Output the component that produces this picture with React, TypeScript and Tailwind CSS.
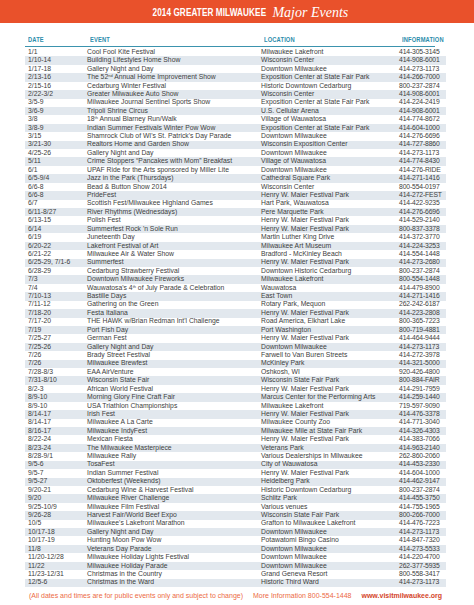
type Row = [string, string, string, string];

const rows: Row[] = [
  ["1/1", "Cool Fool Kite Festival", "Milwaukee Lakefront", "414-305-3145"],
  ["1/10-14", "Building Lifestyles Home Show", "Wisconsin Center", "414-908-6001"],
  ["1/17-18", "Gallery Night and Day", "Downtown Milwaukee", "414-273-1173"],
  ["2/13-16", "The 52^nd^ Annual Home Improvement Show", "Exposition Center at State Fair Park", "414-266-7000"],
  ["2/15-16", "Cedarburg Winter Festival", "Historic Downtown Cedarburg", "800-237-2874"],
  ["2/22-3/2", "Greater Milwaukee Auto Show", "Wisconsin Center", "414-908-6001"],
  ["3/5-9", "Milwaukee Journal Sentinel Sports Show", "Exposition Center at State Fair Park", "414-224-2419"],
  ["3/6-9", "Tripoli Shrine Circus", "U.S. Cellular Arena", "414-908-6001"],
  ["3/8", "18^th^ Annual Blarney Run/Walk", "Village of Wauwatosa", "414-774-8672"],
  ["3/8-9", "Indian Summer Festivals Winter Pow Wow", "Exposition Center at State Fair Park", "414-604-1000"],
  ["3/15", "Shamrock Club of WI's St. Patrick's Day Parade", "Downtown Milwaukee", "414-276-6696"],
  ["3/21-30", "Realtors Home and Garden Show", "Wisconsin Exposition Center", "414-727-8860"],
  ["4/25-26", "Gallery Night and Day", "Downtown Milwaukee", "414-273-1173"],
  ["5/11", "Crime Stoppers \u201cPancakes with Mom\u201d Breakfast", "Village of Wauwatosa", "414-774-8430"],
  ["6/1", "UPAF Ride for the Arts sponsored by Miller Lite", "Downtown Milwaukee", "414-276-RIDE"],
  ["6/5-9/4", "Jazz in the Park (Thursdays)", "Cathedral Square Park", "414-271-1416"],
  ["6/6-8", "Bead & Button Show 2014", "Wisconsin Center", "800-554-0197"],
  ["6/6-8", "PrideFest", "Henry W. Maier Festival Park", "414-272-FEST"],
  ["6/7", "Scottish Fest/Milwaukee Highland Games", "Hart Park, Wauwatosa", "414-422-9235"],
  ["6/11-8/27", "River Rhythms (Wednesdays)", "Pere Marquette Park", "414-276-6696"],
  ["6/13-15", "Polish Fest", "Henry W. Maier Festival Park", "414-529-2140"],
  ["6/14", "Summerfest Rock 'n Sole Run", "Henry W. Maier Festival Park", "800-837-3378"],
  ["6/19", "Juneteenth Day", "Martin Luther King Drive", "414-372-3770"],
  ["6/20-22", "Lakefront Festival of Art", "Milwaukee Art Museum", "414-224-3253"],
  ["6/21-22", "Milwaukee Air & Water Show", "Bradford - McKinley Beach", "414-554-1448"],
  ["6/25-29, 7/1-6", "Summerfest", "Henry W. Maier Festival Park", "414-273-2680"],
  ["6/28-29", "Cedarburg Strawberry Festival", "Downtown Historic Cedarburg", "800-237-2874"],
  ["7/3", "Downtown Milwaukee Fireworks", "Milwaukee Lakefront", "800-554-1448"],
  ["7/4", "Wauwatosa's 4^th^ of July Parade & Celebration", "Wauwatosa", "414-479-8900"],
  ["7/10-13", "Bastille Days", "East Town", "414-271-1416"],
  ["7/11-12", "Gathering on the Green", "Rotary Park, Mequon", "262-242-6187"],
  ["7/18-20", "Festa Italiana", "Henry W. Maier Festival Park", "414-223-2808"],
  ["7/17-20", "THE HAWK w/Brian Redman Int'l Challenge", "Road America, Elkhart Lake", "800-365-7223"],
  ["7/19", "Port Fish Day", "Port Washington", "800-719-4881"],
  ["7/25-27", "German Fest", "Henry W. Maier Festival Park", "414-464-9444"],
  ["7/25-26", "Gallery Night and Day", "Downtown Milwaukee", "414-273-1173"],
  ["7/26", "Brady Street Festival", "Farwell to Van Buren Streets", "414-272-3978"],
  ["7/26", "Milwaukee Brewfest", "McKinley Park", "414-321-5000"],
  ["7/28-8/3", "EAA AirVenture", "Oshkosh, WI", "920-426-4800"],
  ["7/31-8/10", "Wisconsin State Fair", "Wisconsin State Fair Park", "800-884-FAIR"],
  ["8/2-3", "African World Festival", "Henry W. Maier Festival Park", "414-291-7959"],
  ["8/9-10", "Morning Glory Fine Craft Fair", "Marcus Center for the Performing Arts", "414-259-1440"],
  ["8/9-10", "USA Triathlon Championships", "Milwaukee Lakefront", "719-597-9090"],
  ["8/14-17", "Irish Fest", "Henry W. Maier Festival Park", "414-476-3378"],
  ["8/14-17", "Milwaukee A La Carte", "Milwaukee County Zoo", "414-771-3040"],
  ["8/16-17", "Milwaukee IndyFest", "Milwaukee Mile at State Fair Park", "414-326-4303"],
  ["8/22-24", "Mexican Fiesta", "Henry W. Maier Festival Park", "414-383-7066"],
  ["8/23-24", "The Milwaukee Masterpiece", "Veterans Park", "414-963-2140"],
  ["8/28-9/1", "Milwaukee Rally", "Various Dealerships in Milwaukee", "262-860-2060"],
  ["9/5-6", "TosaFest", "City of Wauwatosa", "414-453-2330"],
  ["9/5-7", "Indian Summer Festival", "Henry W. Maier Festival Park", "414-604-1000"],
  ["9/5-27", "Oktoberfest (Weekends)", "Heidelberg Park", "414-462-9147"],
  ["9/20-21", "Cedarburg Wine & Harvest Festival", "Historic Downtown Cedarburg", "800-237-2874"],
  ["9/20", "Milwaukee River Challenge", "Schlitz Park", "414-455-3750"],
  ["9/25-10/9", "Milwaukee Film Festival", "Various venues", "414-755-1965"],
  ["9/26-28", "Harvest Fair/World Beef Expo", "Wisconsin State Fair Park", "800-266-7000"],
  ["10/5", "Milwaukee's Lakefront Marathon", "Grafton to Milwaukee Lakefront", "414-476-7223"],
  ["10/17-18", "Gallery Night and Day", "Downtown Milwaukee", "414-273-1173"],
  ["10/17-19", "Hunting Moon Pow Wow", "Potawatomi Bingo Casino", "414-847-7320"],
  ["11/8", "Veterans Day Parade", "Downtown Milwaukee", "414-273-5533"],
  ["11/20-12/28", "Milwaukee Holiday Lights Festival", "Downtown Milwaukee", "414-220-4700"],
  ["11/22", "Milwaukee Holiday Parade", "Downtown Milwaukee", "262-377-5935"],
  ["11/23-12/31", "Christmas in the Country", "Grand Geneva Resort", "800-558-3417"],
  ["12/5-6", "Christmas in the Ward", "Historic Third Ward", "414-273-1173"],
];

// "52^nd^" -> 52 + superscript nd
function withSup(text: string) {
  return text.split("^").map((part, i) =>
    i % 2 === 1 ? (
      <sup key={i} className="relative -top-[2px] align-baseline text-[4px]">
        {part}
      </sup>
    ) : (
      <span key={i}>{part}</span>
    )
  );
}

function HeadLabel({ children }: { children: string }) {
  return (
    <span className="inline-block origin-left scale-x-[0.72] font-['Liberation_Sans_Narrow','Liberation_Sans',sans-serif] text-[8px] font-bold tracking-[0.2px] text-[#2b8cab]">
      {children}
    </span>
  );
}

export default function App() {
  return (
    <div className="h-[605px] w-[474px] overflow-hidden bg-white font-['Liberation_Sans',Arial,sans-serif]">
      <header className="flex h-[23px] items-center justify-center bg-[#e9512b] pl-[14px] pt-[2px]">
        <span className="inline-block scale-x-[0.82] font-['Liberation_Sans_Narrow','Liberation_Sans',sans-serif] text-[10px] font-bold tracking-[0.1px] text-white">
          2014 GREATER MILWAUKEE
        </span>
        <span className="-ml-[6px] font-['Liberation_Serif',serif] text-[14px] italic leading-none text-white">
          Major Events
        </span>
      </header>

      <div className="ml-[25px] mt-[13px] w-[410px] border-b-[1.5px] border-[#3b93ae] pb-[2px]">
        <div className="grid h-[8px] grid-cols-[62px_174px_138px_1fr] items-center pl-[3px] leading-none">
          <HeadLabel>DATE</HeadLabel>
          <HeadLabel>EVENT</HeadLabel>
          <HeadLabel>LOCATION</HeadLabel>
          <HeadLabel>INFORMATION</HeadLabel>
        </div>
      </div>

      <div className="ml-[25px] mt-[1px] w-[421px] text-[6.8px] leading-none text-[#404040]">
        {rows.map((r, i) => (
          <div
            key={i}
            className={`grid h-[8.435px] grid-cols-[59px_174px_138px_1fr] items-center whitespace-nowrap pl-[3px] ${
              i % 2 === 1 ? "bg-[#e2e8ee]" : ""
            }`}
          >
            <span>{r[0]}</span>
            <span>{withSup(r[1])}</span>
            <span>{r[2]}</span>
            <span className="tracking-[-0.15px]">{r[3]}</span>
          </div>
        ))}
      </div>

      <footer className="ml-[29px] mt-[3px] flex h-[10px] w-[420px] items-center whitespace-nowrap font-['Liberation_Sans_Narrow','Liberation_Sans',sans-serif] text-[7px] leading-none">
        <span className="text-[#ec6a45]">
          (All dates and times are for public events only and subject to change)
        </span>
        <span className="ml-[10px] text-[#ec6a45]">More Information 800-554-1448</span>
        <span className="ml-[10px] font-bold text-[#d4452b]">www.visitmilwaukee.org</span>
      </footer>
    </div>
  );
}
